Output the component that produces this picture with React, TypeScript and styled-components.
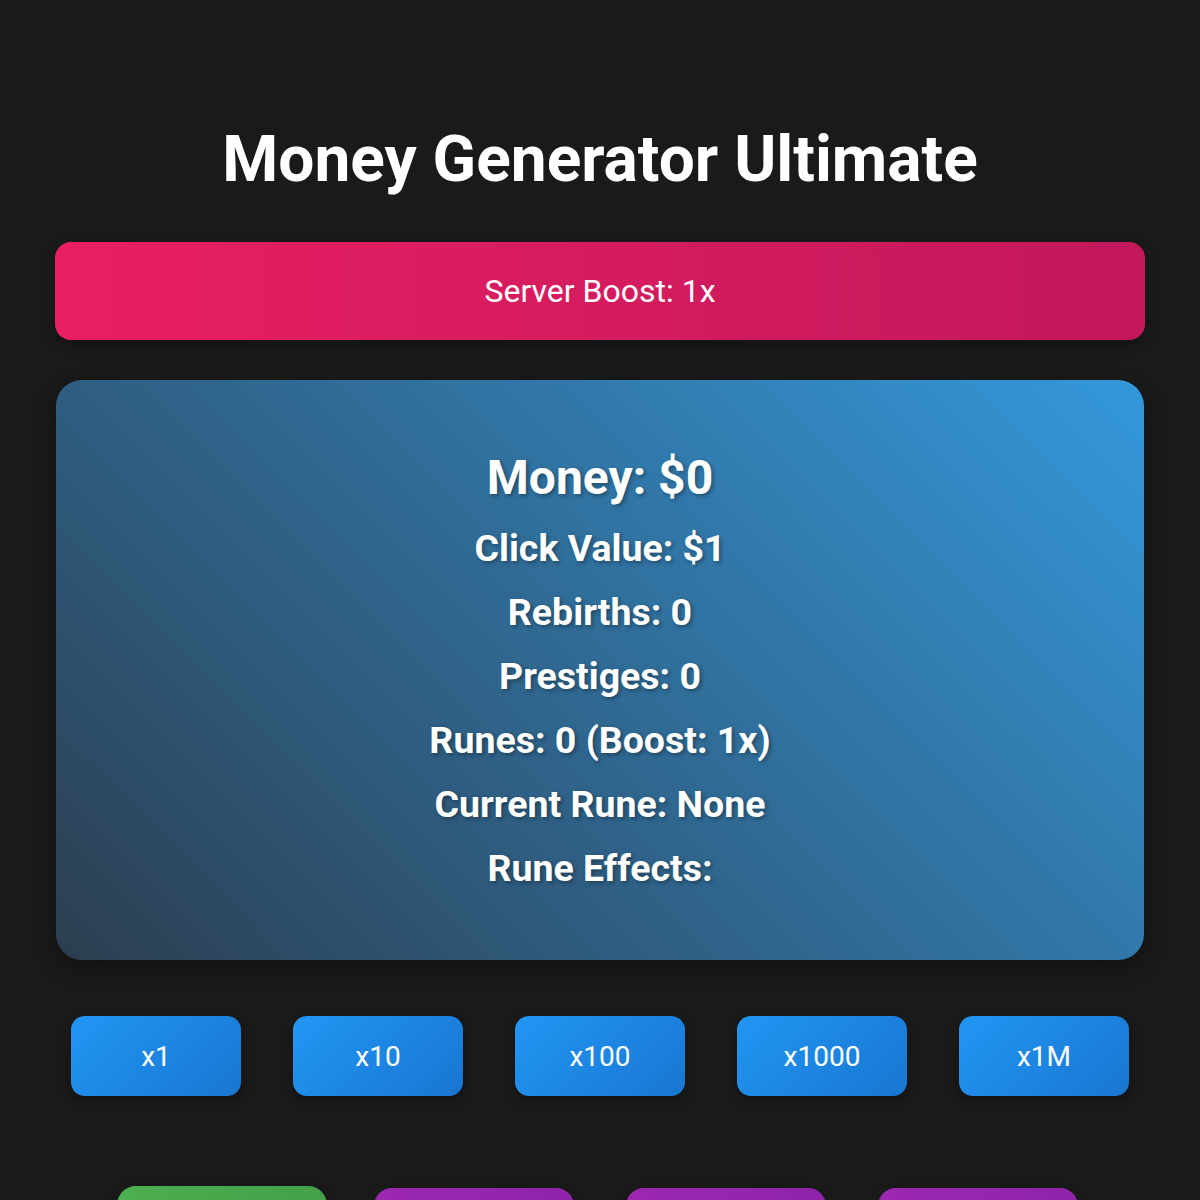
import React from "react";
import styled, { createGlobalStyle } from "styled-components";

const Global = createGlobalStyle`
  html, body { margin: 0; padding: 0; background: #1a1a1a; }
  body { font-family: Roboto, "Noto Sans", "Liberation Sans", sans-serif; color: #fff; }
`;

const Page = styled.div`
  padding: 0 55px;
  display: flex;
  flex-direction: column;
  align-items: stretch;
`;

const Title = styled.h1`
  margin: 122px 0 44px;
  text-align: center;
  font-size: 64px;
  font-weight: 700;
  line-height: 76px;
  color: #fff;
`;

const BoostBar = styled.div`
  height: 98px;
  border-radius: 16px;
  background: linear-gradient(90deg, #e91e63, #c2185b);
  box-shadow: 0 4px 12px rgba(0, 0, 0, 0.3);
  display: flex;
  align-items: center;
  justify-content: center;
  font-size: 32px;
  font-weight: 400;
`;

const StatsPanel = styled.div`
  margin: 40px 1px 0;
  height: 580px;
  box-sizing: border-box;
  border-radius: 26px;
  background: linear-gradient(45deg, #2c3e50, #3498db);
  box-shadow: 0 8px 20px rgba(0, 0, 0, 0.35);
  display: flex;
  flex-direction: column;
  align-items: center;
  padding-top: 78px;
  gap: 24px;
`;

const Stat = styled.div<{ $big?: boolean }>`
  font-size: ${(p) => (p.$big ? "48px" : "37.5px")};
  font-weight: 700;
  line-height: 40px;
  margin-bottom: ${(p) => (p.$big ? "6px" : "0")};
  text-shadow: 2px 2px 4px rgba(0, 0, 0, 0.35);
`;

const MultiRow = styled.div`
  margin-top: 56px;
  display: flex;
  justify-content: center;
  gap: 52px;
`;

const MultiButton = styled.button`
  width: 170px;
  height: 80px;
  border: none;
  border-radius: 14px;
  background: linear-gradient(135deg, #2196f3, #1976d2);
  color: #fff;
  font-family: inherit;
  font-size: 28px;
  box-shadow: 0 4px 10px rgba(0, 0, 0, 0.3);
  cursor: pointer;
`;

const ActionRow = styled.div`
  margin-top: 92px;
  display: flex;
  justify-content: center;
  align-items: flex-start;
  gap: 52px;
  height: 120px;
`;

const ActionButton = styled.button<{ $kind: "green" | "purple"; $active?: boolean }>`
  width: 200px;
  height: 80px;
  border: none;
  border-radius: 18px;
  transform: ${(p) => (p.$active ? "scale(1.05)" : "none")};
  background: ${(p) =>
    p.$kind === "green"
      ? "linear-gradient(90deg, #4caf50, #43a047)"
      : "linear-gradient(90deg, #9c27b0, #8e24aa)"};
  color: #fff;
  font-family: inherit;
  font-size: 26px;
  box-shadow: 0 4px 10px rgba(0, 0, 0, 0.3);
`;

export default function App() {
  return (
    <>
      <Global />
      <Page>
        <Title>Money Generator Ultimate</Title>
        <BoostBar>Server Boost: 1x</BoostBar>
        <StatsPanel>
          <Stat $big>Money: $0</Stat>
          <Stat>Click Value: $1</Stat>
          <Stat>Rebirths: 0</Stat>
          <Stat>Prestiges: 0</Stat>
          <Stat>Runes: 0 (Boost: 1x)</Stat>
          <Stat>Current Rune: None</Stat>
          <Stat>Rune Effects:</Stat>
        </StatsPanel>
        <MultiRow>
          {["x1", "x10", "x100", "x1000", "x1M"].map((m) => (
            <MultiButton key={m}>{m}</MultiButton>
          ))}
        </MultiRow>
        <ActionRow>
          <ActionButton $kind="green" $active>Generate</ActionButton>
          <ActionButton $kind="purple">Rebirth</ActionButton>
          <ActionButton $kind="purple">Prestige</ActionButton>
          <ActionButton $kind="purple">Runes</ActionButton>
        </ActionRow>
      </Page>
    </>
  );
}
